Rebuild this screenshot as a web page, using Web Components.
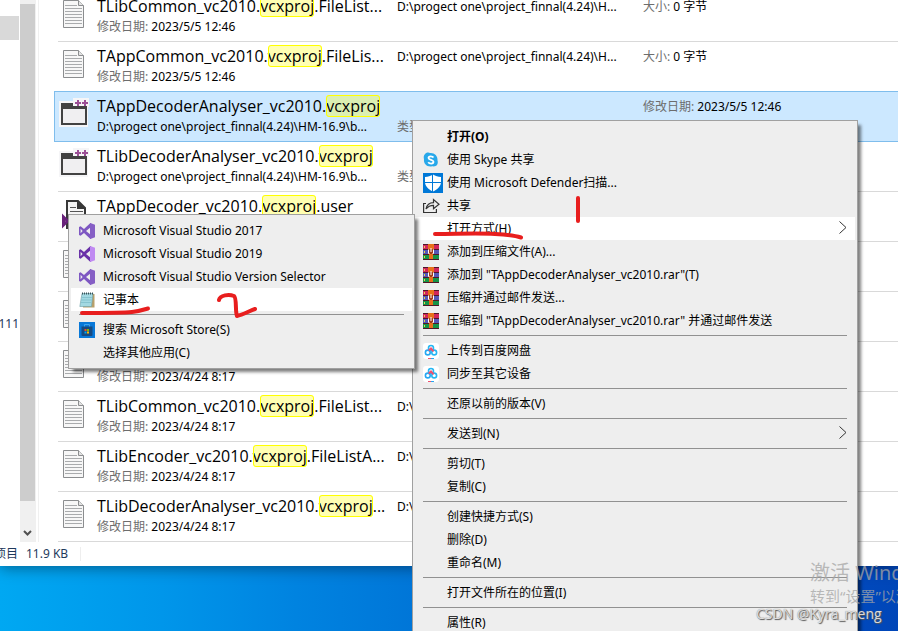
<!DOCTYPE html>
<html lang="zh-CN">
<head>
<meta charset="utf-8">
<title>Explorer</title>
<style>
    body {
        margin: 0;
        height: 100vh;
        overflow: hidden;
        font: 12px/20px "Noto Sans", "Noto Sans CJK SC", sans-serif;
        color: #000;
    }
    i {
        font-style: normal;
        color: #6d6d6d;
    }
    .main {
        left: 412px;
        top: 120px;
        width: 446px;
    }
    .sub {
        left: 68px;
        top: 214px;
        width: 347px;
    }
</style>
</head>
<body>
<desktop-screen>
    <explorer-window>
        <span slot="nav">111</span>
        <file-row icon="text">TLibCommon_vc2010.<mark>vcxproj</mark>.FileList...
            <span slot="info"><i>修改日期:</i> 2023/5/5 12:46</span>
            <span slot="path">D:\progect one\project_finnal(4.24)\H...</span>
            <span slot="extra"><i>大小:</i> 0 字节</span>
        </file-row>
        <file-row icon="text">TAppCommon_vc2010.<mark>vcxproj</mark>.FileLis...
            <span slot="info"><i>修改日期:</i> 2023/5/5 12:46</span>
            <span slot="path">D:\progect one\project_finnal(4.24)\H...</span>
            <span slot="extra"><i>大小:</i> 0 字节</span>
        </file-row>
        <file-row icon="project" selected>TAppDecoderAnalyser_vc2010.<mark>vcxproj</mark>
            <span slot="info">D:\progect one\project_finnal(4.24)\HM-16.9\b...</span>
            <span slot="type"><i>类型</i></span>
            <span slot="extra"><i>修改日期:</i> 2023/5/5 12:46</span>
        </file-row>
        <file-row icon="project">TLibDecoderAnalyser_vc2010.<mark>vcxproj</mark>
            <span slot="info">D:\progect one\project_finnal(4.24)\HM-16.9\b...</span>
            <span slot="type"><i>类型</i></span>
        </file-row>
        <file-row icon="user">TAppDecoder_vc2010.<mark>vcxproj</mark>.user</file-row>
        <file-row icon="text"></file-row>
        <file-row icon="text"></file-row>
        <file-row icon="text">
            <span slot="info"><i>修改日期:</i> 2023/4/24 8:17</span>
        </file-row>
        <file-row icon="text">TLibCommon_vc2010.<mark>vcxproj</mark>.FileList...
            <span slot="info"><i>修改日期:</i> 2023/4/24 8:17</span>
            <span slot="path">D:\</span>
        </file-row>
        <file-row icon="text">TLibEncoder_vc2010.<mark>vcxproj</mark>.FileListA...
            <span slot="info"><i>修改日期:</i> 2023/4/24 8:17</span>
            <span slot="path">D:\</span>
        </file-row>
        <file-row icon="text">TLibDecoderAnalyser_vc2010.<mark>vcxproj</mark>...
            <span slot="info"><i>修改日期:</i> 2023/4/24 8:17</span>
            <span slot="path">D:\</span>
        </file-row>
        <span slot="count">项目</span>
        <span slot="size">11.9 KB</span>
    </explorer-window>

    <context-menu class="main" slot="over">
        <menu-item bold>打开(O)</menu-item>
        <menu-item icon="skype">使用 Skype 共享</menu-item>
        <menu-item icon="shield">使用 Microsoft Defender扫描...</menu-item>
        <menu-item icon="share">共享</menu-item>
        <menu-item active more>打开方式(H)</menu-item>
        <menu-item icon="rar">添加到压缩文件(A)...</menu-item>
        <menu-item icon="rar">添加到 "TAppDecoderAnalyser_vc2010.rar"(T)</menu-item>
        <menu-item icon="rar">压缩并通过邮件发送...</menu-item>
        <menu-item icon="rar">压缩到 "TAppDecoderAnalyser_vc2010.rar" 并通过邮件发送</menu-item>
        <menu-line></menu-line>
        <menu-item icon="cloud">上传到百度网盘</menu-item>
        <menu-item icon="cloud">同步至其它设备</menu-item>
        <menu-line></menu-line>
        <menu-item>还原以前的版本(V)</menu-item>
        <menu-line></menu-line>
        <menu-item more>发送到(N)</menu-item>
        <menu-line></menu-line>
        <menu-item>剪切(T)</menu-item>
        <menu-item>复制(C)</menu-item>
        <menu-line></menu-line>
        <menu-item>创建快捷方式(S)</menu-item>
        <menu-item>删除(D)</menu-item>
        <menu-item>重命名(M)</menu-item>
        <menu-line></menu-line>
        <menu-item>打开文件所在的位置(I)</menu-item>
        <menu-line></menu-line>
        <menu-item>属性(R)</menu-item>
    </context-menu>

    <context-menu class="sub" slot="over">
        <menu-item icon="vs">Microsoft Visual Studio 2017</menu-item>
        <menu-item icon="vs2019">Microsoft Visual Studio 2019</menu-item>
        <menu-item icon="vs">Microsoft Visual Studio Version Selector</menu-item>
        <menu-item icon="notepad" active>记事本</menu-item>
        <menu-line></menu-line>
        <menu-item icon="store">搜索 Microsoft Store(S)</menu-item>
        <menu-item>选择其他应用(C)</menu-item>
    </context-menu>

    <water-mark slot="over">
        <span slot="title">激活 Windows</span>
        <span slot="hint">转到“设置”以激活</span>
        <span slot="author">CSDN @Kyra_meng</span>
    </water-mark>
    <red-ink slot="over"></red-ink>
</desktop-screen>

<script>
const vsShape = (left, right) => `<svg width="16" height="16" viewBox="0 0 16 16">
    <path fill="${left}" fill-rule="evenodd" d="M0 4l1.6-.8L5 5.9 11.400 0 12 .2V4L7 8l5 4v3.800l-.6.200L5 10.100 1.600 12.800 0 12zM1.600 5.800v4.400L3.600 8z"/>
    <path fill="${right}" d="M11.400 0L16 1.700v12.600L11.400 16l-.4-.4V.4z"/></svg>`

const icons = {
    text: `<svg width="21" height="28" viewBox="0 0 21 28">
        <path fill="#f7f7f7" stroke="#8b8d8f" d="M.5.500h15l5 5v22H.5z"/>
        <path fill="#e4e4e4" stroke="#8b8d8f" d="M15.500.500v5h5"/>
        <path stroke="#a9abad" d="M2 5.500h12M2 8.500h17M2 11.500h17M2 14.500h17M2 17.500h17M2 20.500h17M2 23.500h17"/></svg>`,
    project: `<svg width="30" height="30" viewBox="0 0 30 30">
        <path fill="#f5f5f7" d="M0 3h14V0h16v9h-1v20H0z"/>
        <path fill="#424242" d="M2 5h12v3h14v19H2z"/>
        <path fill="#f0eff1" d="M4 11h22v14H4z"/>
        <path fill="#f5f5f7" d="M15 0h15v8H15z"/>
        <path stroke="#9b4f96" stroke-width="2" d="M16 5h6M19 2v6M23 5h6M26 2v6"/></svg>`,
    user: `<svg width="28" height="32" viewBox="0 0 28 32">
        <path fill="#f5f5f5" stroke="#383838" stroke-width="2" d="M5 28V1h11l7 7v20z"/>
        <path fill="#383838" d="M15 1v8h9z"/>
        <path stroke="#555" d="M8 7.500h6M8 11.500h13M8 14.500h13"/>
        <path fill="none" stroke="#68217a" stroke-width="3" d="M1.500 17v8l4-4z"/></svg>`,
    skype: `<svg width="16" height="16" viewBox="0 0 16 16">
        <path fill="#28a8ea" d="M2 2C4 0 6 .500 7 1c4-.5 8 2.500 7.500 7.500 1 3-.500 6-4 6-1-.5-1 0-3 0C3 14.500.500 11 1 7.500.500 5 .500 3.500 2 2z"/>
        <path fill="none" stroke="#fff" stroke-width="1.800" d="M10.500 5.500C9.500 4 5.500 3.800 5.500 6s5 1.500 5 3.800-4 2.200-5.300.400"/></svg>`,
    shield: `<svg width="20" height="20" viewBox="0 0 20 20">
        <path fill="#0078d7" d="M0 0h20v20H0z"/>
        <path fill="#fff" d="M10 1.500C7.500 3 5 3.800 2 4v5c0 4 3.500 7.500 8 9.500 4.500-2 8-5.500 8-9.500V4c-3-.2-5.500-1-8-2.500z"/>
        <path stroke="#0078d7" d="M9.500 1v18M1 9.500h18"/></svg>`,
    share: `<svg width="17" height="16" viewBox="0 0 17 16">
        <path fill="none" stroke="#333" stroke-width="1.200" d="M3 5.500H.6v9h12.800V11M3 11C4 6 6.500 4.600 10.500 4.600V1.500L16 6.200l-5.500 4.600V7.400C7 7.400 5 8.500 3 11z"/></svg>`,
    rar: `<svg width="16" height="16" viewBox="0 0 16 16">
        <path fill="#d0265c" d="M0 0h16v5H0z"/><path fill="#5557b8" d="M0 5h16v5H0z"/><path fill="#159447" d="M0 10h16v5H0z"/>
        <path stroke="#501727" d="M0 .500h5M11 .500h5M0 5.500h16M0 10.500h16M0 15.500h16"/>
        <path fill="#e9d34b" d="M1 2h1v2H1zM1 7h1v2H1zM1 12h1v2H1z"/>
        <path fill="#e8701a" d="M5 0h6v5H5zM6 10h4v5H6z"/><path fill="#a33c1c" d="M5 5h6v5H5z"/>
        <path fill="none" stroke="#fff" d="M5.500 5.500v4h1M10.500 5.500v4h-1M8 4v4"/></svg>`,
    cloud: `<svg width="16" height="16" viewBox="0 0 16 16">
        <rect width="16" height="16" rx="3" fill="#fff"/>
        <g fill="none" stroke-width="1.600"><circle cx="8" cy="5" r="2.500" stroke="#25b7f3"/>
        <circle cx="4.800" cy="9.500" r="2.400" stroke="#25a8f3"/><circle cx="11.200" cy="9.500" r="2.400" stroke="#25b7f3"/>
        <path stroke="#f0506e" stroke-width="2" d="M5.800 7.500L8 5.500l2.500 2.800"/></g>
        <path stroke="#f0506e" d="M5 15.500h3"/><path stroke="#25a8f3" d="M8 15.500h3"/></svg>`,
    vs: vsShape('#7e57c2', '#865fc5'),
    vs2019: vsShape('#6a32a8', '#c08af2'),
    notepad: `<svg width="16" height="16" viewBox="0 0 16 16">
        <path fill="#b9a06a" d="M13 2h2.500v13.500H4V14z"/><path fill="#a3d9e2" stroke="#6f9da5" stroke-width=".6" d="M3 1.500h11L12.500 14.500H.8z"/>
        <path stroke="#74b5c2" stroke-width=".6" d="M2.800 5.500h10M2.500 8h10M2 10.500h10"/>
        <path stroke="#39545a" stroke-dasharray="1 1" stroke-width="2" d="M3 1.500h11"/></svg>`,
    store: `<svg width="16" height="16" viewBox="0 0 16 16">
        <path fill="#0878d8" d="M0 0h16v16H0z"/><path fill="none" stroke="#3fa5ec" d="M5.500 5V2.500h5V5"/>
        <path fill="#174a80" d="M2.500 4.500h11V13q0 1-1 1h-9q-1 0-1-1z"/>
        <path fill="#f25022" d="M5.500 7h2v2h-2z"/><path fill="#7fba00" d="M8 7h2v2H8z"/>
        <path fill="#00a4ef" d="M5.500 9.500h2v2h-2z"/><path fill="#ffb900" d="M8 9.500h2v2H8z"/></svg>`
}

// base for all: puts the markup in an open shadow root
class Base extends HTMLElement {
    constructor() {
        super();
        const template = document.createElement('template')
        template.innerHTML = this.render()
        this.attachShadow({ mode: 'open' })
        this.shadowRoot.appendChild(template.content.cloneNode(true))
    }
}

class DesktopScreen extends Base {
    render() {
        return `
        <style>
            :host {
                display: grid;
                grid-template-rows: 1fr 65px;
                position: relative;
                height: 100%;
                overflow: hidden;
                background: linear-gradient(90deg, #00a8f2 0%, #0096ea 18%, #0083e0 33%, #0076d8 46%, #004cc2 90%, #0046b8 100%);
            }
        </style>
        <slot></slot>
        <slot name="over"></slot>`
    }
}

class ExplorerWindow extends Base {
    render() {
        return `
        <style>
            :host {
                display: grid;
                grid-template-rows: 1fr 24px;
                min-height: 0;
                background: #fff;
                box-shadow: 0 2px 14px rgba(0, 0, 0, .4);
            }
            .body {
                display: grid;
                grid-template-columns: 20px 16px 3px 1fr;
                min-height: 0;
            }
            nav {
                display: flex;
                flex-direction: column;
                justify-content: space-between;
                align-items: flex-end;
                padding: 16px 1px 208px 0;
                color: #1e395b;
            }
            nav::before {
                content: '';
                width: 100%;
                height: 24px;
                background: #d9d9d9;
            }
            .scroll {
                display: flex;
                flex-direction: column;
                justify-content: space-between;
                align-items: center;
                padding: 4px 1px 0 0;
                background: #f0f0f0;
            }
            .thumb {
                flex: 1;
                width: 100%;
                background: #cdcdcd;
            }
            .scroll svg {
                margin: 28px 0 4px;
            }
            .gap {
                border-right: 1px solid #f0f0f0;
            }
            .list {
                display: flex;
                flex-direction: column;
                justify-content: flex-end;
                min-width: 0;
                overflow: hidden;
                padding-left: 15px;
            }
            footer {
                display: flex;
                align-items: center;
                white-space: nowrap;
                color: #1e395b;
            }
            .count {
                display: flex;
                justify-content: flex-end;
                width: 18px;
                margin-right: 8px;
            }
            .size {
                width: 54px;
                border-right: 1px solid #eee;
                line-height: 14px;
            }
        </style>
        <div class="body">
            <nav><slot name="nav"></slot></nav>
            <div class="scroll">
                <div class="thumb"></div>
                <svg width="9" height="9" viewBox="0 0 9 9"><path fill="none" stroke="#505050" stroke-width="2" d="M1 2l3.500 3.500L8 2"/></svg>
            </div>
            <div class="gap"></div>
            <div class="list"><slot></slot></div>
        </div>
        <footer>
            <div class="count"><slot name="count"></slot></div>
            <div class="size"><slot name="size"></slot></div>
        </footer>`
    }
}

class FileRow extends Base {
    render() {
        return `
        <style>
            :host {
                display: block;
                flex: none;
                padding-left: 4px;
            }
            :host([selected]) {
                margin-top: -1px;
                padding-left: 3px;
                border: 1px solid #7fbdec;
                border-right: 0;
                background: #cce8ff;
            }
            .row {
                display: grid;
                grid-template-columns: 39px 300px 246px 1fr;
                height: 49px;
                border-bottom: 1px solid #d9d9d9;
                white-space: nowrap;
            }
            :host([selected]) .row {
                border: 0;
            }
            .icon {
                padding: 8px 0 0 5px;
            }
            :host([icon=project]) .icon {
                padding: 6px 0 0 1px;
            }
            :host([icon=user]) .icon {
                padding-left: 4px;
            }
            .cell {
                padding-top: 5px;
            }
            .name {
                height: 20px;
                font: 16px/18px "Open Sans", "Noto Sans CJK SC", sans-serif;
            }
            .line {
                height: 20px;
            }
            ::slotted(mark) {
                border-radius: 3px;
                outline: 1px solid #ff0;
                outline-offset: -1px;
                background: rgba(255, 255, 0, .3);
                color: #000;
            }
            svg {
                display: block;
            }
        </style>
        <div class="row">
            <div class="icon"></div>
            <div class="cell">
                <div class="name"><slot></slot></div>
                <div class="line"><slot name="info"></slot></div>
            </div>
            <div class="cell">
                <div class="line"><slot name="path"></slot></div>
                <div class="line"><slot name="type"></slot></div>
            </div>
            <div class="cell"><slot name="extra"></slot></div>
        </div>`
    }
    connectedCallback() {
        this.shadowRoot.querySelector('.icon').innerHTML = icons[this.getAttribute('icon')]
    }
}

class ContextMenu extends Base {
    render() {
        return `
        <style>
            :host {
                display: block;
                position: absolute;
                box-sizing: border-box;
                padding: 4px 2px;
                border: 1px solid #a0a0a0;
                background: #eee;
                box-shadow: 4px 4px 3px -1px rgba(0, 0, 0, .5);
            }
        </style>
        <slot></slot>`
    }
}

class MenuItem extends Base {
    render() {
        return `
        <style>
            :host {
                display: block;
            }
            button {
                display: flex;
                align-items: center;
                width: 100%;
                height: 23px;
                padding: 0 8px;
                border: 0;
                background: none;
                font: inherit;
                color: inherit;
                text-align: left;
                white-space: nowrap;
            }
            :host([active]) button {
                background: #fff;
            }
            :host([bold]) button {
                font-weight: bold;
            }
            .icon {
                width: 24px;
            }
            .label {
                flex: 1;
            }
            .arrow {
                display: none;
            }
            :host([more]) .arrow {
                display: block;
            }
            svg {
                display: block;
            }
        </style>
        <button type="button">
            <span class="icon"></span>
            <span class="label"><slot></slot></span>
            <svg class="arrow" width="8" height="15" viewBox="0 0 8 15"><path fill="none" stroke="#333" d="M.5.500l6.500 6-6.500 6"/></svg>
        </button>`
    }
    connectedCallback() {
        this.shadowRoot.querySelector('.icon').innerHTML = icons[this.getAttribute('icon')] || ''
    }
}

class MenuLine extends Base {
    render() {
        return `
        <style>
            :host {
                display: block;
                height: 1px;
                margin: 3px 8px;
                background: #919191;
            }
        </style>`
    }
}

class WaterMark extends Base {
    render() {
        return `
        <style>
            :host {
                display: block;
                position: absolute;
                left: 756px;
                bottom: 8px;
                white-space: nowrap;
                color: rgba(165, 165, 165, .75);
                pointer-events: none;
            }
            .title, .hint {
                padding-left: 54px;
            }
            .title {
                font-size: 20px;
                line-height: 28px;
            }
            .hint {
                font-size: 15px;
                line-height: 18px;
            }
            .author {
                font: 14px/18px "Open Sans", sans-serif;
                color: rgba(240, 240, 240, .85);
                text-shadow: 1px 1px 1px #555, 0 0 1px #777;
            }
        </style>
        <div class="title"><slot name="title"></slot></div>
        <div class="hint"><slot name="hint"></slot></div>
        <div class="author"><slot name="author"></slot></div>`
    }
}

class RedInk extends Base {
    render() {
        return `
        <style>
            :host {
                display: block;
                position: absolute;
                left: 0;
                top: 0;
                pointer-events: none;
            }
        </style>
        <svg width="620" height="330" viewBox="0 0 620 330" fill="none" stroke="#e81e1e" stroke-width="4" stroke-linecap="round" stroke-linejoin="round">
            <path d="M578 198v23"/>
            <path d="M435 234c22 0 42-1 60 0 12 .600 20 1.500 26 3.500"/>
            <path d="M82 313c20 0 40 0 50-1 7-.7 11-2 16-3.500"/>
            <path d="M219 300c1-5 10-6 15-4 3 2 1 16 3 20 6-1 12-5 18-7"/>
        </svg>`
    }
}

customElements.define('desktop-screen', DesktopScreen)
customElements.define('explorer-window', ExplorerWindow)
customElements.define('file-row', FileRow)
customElements.define('context-menu', ContextMenu)
customElements.define('menu-item', MenuItem)
customElements.define('menu-line', MenuLine)
customElements.define('water-mark', WaterMark)
customElements.define('red-ink', RedInk)
</script>
</body>
</html>
